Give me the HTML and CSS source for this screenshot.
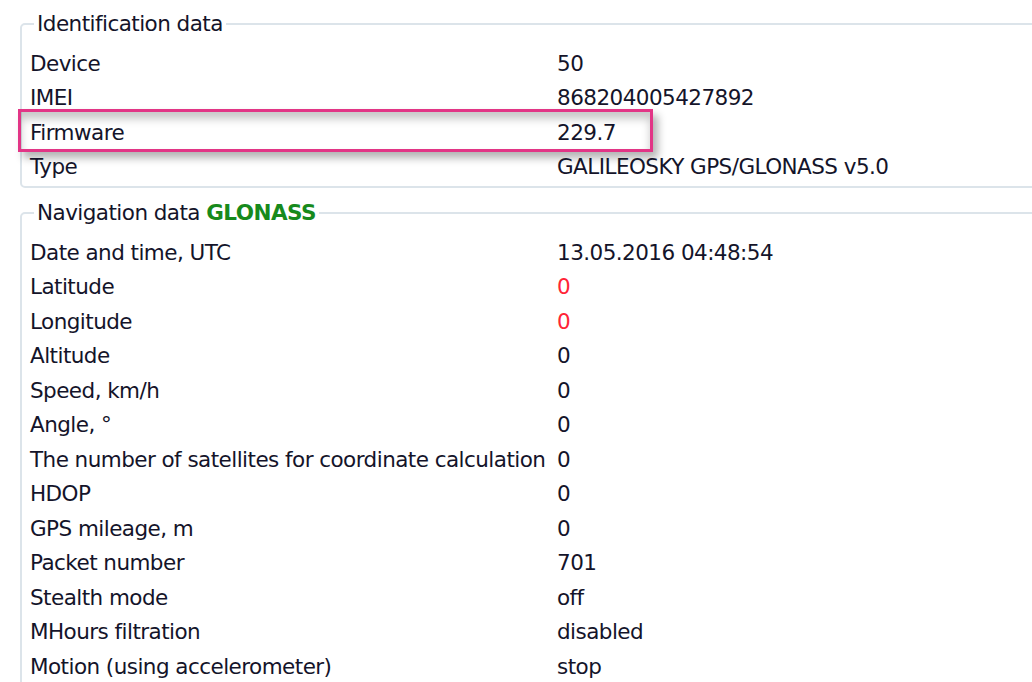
FILE: index.html
```html
<!DOCTYPE html>
<html lang="en">
<head>
    <meta charset="UTF-8">
    <title>Device info</title>
    <link rel="stylesheet" href="styles.css">
</head>
<body>

<!-- Identification -->
<fieldset class="group">
    <legend>Identification data</legend>
    <div class="row"><span class="name">Device</span><span class="value">50</span></div>
    <div class="row"><span class="name">IMEI</span><span class="value">868204005427892</span></div>
    <div class="row marked"><span class="name">Firmware</span><span class="value">229.7</span></div>
    <div class="row"><span class="name">Type</span><span class="value">GALILEOSKY GPS/GLONASS v5.0</span></div>
</fieldset>

<!-- Navigation -->
<fieldset class="group">
    <legend>Navigation data <b class="system">GLONASS</b></legend>
    <div class="row"><span class="name">Date and time, UTC</span><span class="value">13.05.2016 04:48:54</span></div>
    <div class="row"><span class="name">Latitude</span><span class="value bad">0</span></div>
    <div class="row"><span class="name">Longitude</span><span class="value bad">0</span></div>
    <div class="row"><span class="name">Altitude</span><span class="value">0</span></div>
    <div class="row"><span class="name">Speed, km/h</span><span class="value">0</span></div>
    <div class="row"><span class="name">Angle, &deg;</span><span class="value">0</span></div>
    <div class="row"><span class="name">The number of satellites for coordinate calculation</span><span class="value">0</span></div>
    <div class="row"><span class="name">HDOP</span><span class="value">0</span></div>
    <div class="row"><span class="name">GPS mileage, m</span><span class="value">0</span></div>
    <div class="row"><span class="name">Packet number</span><span class="value">701</span></div>
    <div class="row"><span class="name">Stealth mode</span><span class="value">off</span></div>
    <div class="row"><span class="name">MHours filtration</span><span class="value">disabled</span></div>
    <div class="row"><span class="name">Motion (using accelerometer)</span><span class="value">stop</span></div>
</fieldset>

</body>
</html>
```

FILE: styles.css
```css
body {
    margin: 0;
    height: 682px;
    padding: 7px 0 0 20px;
    box-sizing: border-box;
    background-color: #ffffff;
    font-family: 'DejaVu Sans', sans-serif;
    font-size: 21.5px;
    letter-spacing: -0.55px;
    color: #14142a;
    overflow: hidden;
}

.group {
    width: 1100px;
    margin: 0 0 8px 0;
    padding: 5px 0 2px 8px;
    border: 2px solid #dce4ea;
    border-radius: 5px;
}

.group legend {
    margin-left: 4px;
    padding: 0 3px;
    line-height: 34px;
}

.system {
    color: #178a1c;
}

.row {
    position: relative;
    display: flex;
    height: 34.5px;
    align-items: center;
}

.name {
    width: 527px;
    white-space: nowrap;
}

.bad {
    color: #ff2436;
}

/* pink frame around the firmware line */
.marked::after {
    content: "";
    position: absolute;
    left: -12px;
    top: -6px;
    width: 629px;
    height: 37px;
    border: 3px solid #e23586;
    box-shadow: inset 0 7px 8px rgba(0, 0, 0, 0.22), 5px 6px 8px rgba(0, 0, 0, 0.3);
}
```
